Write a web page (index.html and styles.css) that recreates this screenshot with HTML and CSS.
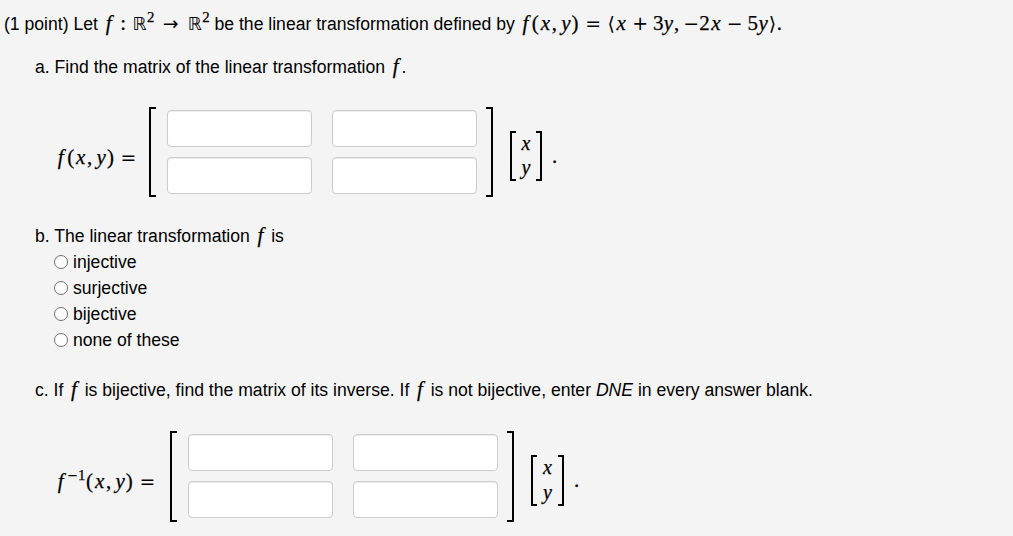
FILE: index.html
```html
<!DOCTYPE html>
<html lang="en">
<head>
<meta charset="utf-8">
<title>Linear transformation problem</title>
<link rel="stylesheet" href="styles.css">
</head>
<body>
<div class="page">
  <p class="intro">(1 point) Let <span class="m"><span class="g it w55">f</span><span class="g rel w278">:</span><span class="g bb w722">ℝ</span><sup class="g w5">2</sup><span class="g op rel w1">→</span><span class="g bb w722">ℝ</span><sup class="g w5">2</sup></span> be the linear transformation defined by <span class="m"><span class="g it w55">f</span><span class="g w389">(</span><span class="g it w572">x</span><span class="g w278">,</span><span class="th"></span><span class="g it w49">y</span><span class="g w389">)</span><span class="g op rel w778">=</span><span class="g ang w389">⟨</span><span class="g it w572">x</span><span class="g op bin w778">+</span><span class="g w5">3</span><span class="g it w49">y</span><span class="g w278">,</span><span class="th"></span><span class="g op w778">−</span><span class="g w5">2</span><span class="g it w572">x</span><span class="g op bin w778">−</span><span class="g w5">5</span><span class="g it w49">y</span><span class="g ang w389">⟩</span><span class="g w278">.</span></span></p>

  <p class="part part-a">a. Find the matrix of the linear transformation <span class="m"><span class="g it w55">f</span></span>.</p>

  <div class="eq eq1">
    <span class="m label label1"><span class="g it w55">f</span><span class="g w389">(</span><span class="g it w572">x</span><span class="g w278">,</span><span class="th"></span><span class="g it w49">y</span><span class="g w389">)</span><span class="g op rel w778">=</span></span>
    <div class="bmat">
      <span class="brk brk-l"></span>
      <div class="cells">
        <input class="ans" type="text" aria-label="row 1 column 1">
        <input class="ans" type="text" aria-label="row 1 column 2">
        <input class="ans" type="text" aria-label="row 2 column 1">
        <input class="ans" type="text" aria-label="row 2 column 2">
      </div>
      <span class="brk brk-r"></span>
    </div>
    <div class="vec">
      <span class="vb vb-l"></span>
      <span class="vcol m"><span class="vx it">x</span><span class="vx it">y</span></span>
      <span class="vb vb-r"></span>
    </div>
    <span class="m dot">.</span>
  </div>

  <p class="part part-b">b. The linear transformation <span class="m"><span class="g it w55">f</span></span> is</p>
  <ul class="choices">
    <li class="choice"><input class="radio" type="radio" name="t" aria-label="injective"><span>injective</span></li>
    <li class="choice"><input class="radio" type="radio" name="t" aria-label="surjective"><span>surjective</span></li>
    <li class="choice"><input class="radio" type="radio" name="t" aria-label="bijective"><span>bijective</span></li>
    <li class="choice"><input class="radio" type="radio" name="t" aria-label="none of these"><span>none of these</span></li>
  </ul>

  <p class="part part-c">c. If <span class="m"><span class="g it w55">f</span></span> is bijective, find the matrix of its inverse. If <span class="m"><span class="g it w55">f</span></span> is not bijective, enter <em>DNE</em> in every answer blank.</p>

  <div class="eq eq2">
    <span class="m label label2"><span class="g it w55">f</span><sup class="inv"><span class="g op w778">−</span><span class="g w5">1</span></sup><span class="g w389">(</span><span class="g it w572">x</span><span class="g w278">,</span><span class="th"></span><span class="g it w49">y</span><span class="g w389">)</span><span class="g op rel w778">=</span></span>
    <div class="bmat bmat2">
      <span class="brk brk-l"></span>
      <div class="cells">
        <input class="ans" type="text" aria-label="inverse row 1 column 1">
        <input class="ans" type="text" aria-label="inverse row 1 column 2">
        <input class="ans" type="text" aria-label="inverse row 2 column 1">
        <input class="ans" type="text" aria-label="inverse row 2 column 2">
      </div>
      <span class="brk brk-r"></span>
    </div>
    <div class="vec vec2">
      <span class="vb vb-l"></span>
      <span class="vcol m"><span class="vx it">x</span><span class="vx it">y</span></span>
      <span class="vb vb-r"></span>
    </div>
    <span class="m dot">.</span>
  </div>
</div>
</body>
</html>
```

FILE: styles.css
```css
html, body {
  margin: 0;
  padding: 0;
  background: #f4f4f4;
}

.page {
  padding: 13.5px 0 0 4px;
  font-family: "Liberation Sans", Arial, sans-serif;
  font-size: 17.6px;
  line-height: 20px;
  color: #000;
}

p {
  margin: 0;
}

/* ---------- math ---------- */
.m {
  font-family: "Liberation Serif", "DejaVu Serif", serif;
  font-size: 21px;
  line-height: 16px;
  white-space: nowrap;
  -webkit-text-stroke: 0.25px #000;
}
.g {
  display: inline-block;
  text-align: center;
  font-style: normal;
}
.it {
  font-style: italic;
}
.w278 { width: 0.278em; }
.w389 { width: 0.389em; }
.w49  { width: 0.49em; }
.w5   { width: 0.5em; }
.w55  { width: 0.55em; }
.w572 { width: 0.572em; }
.w722 { width: 0.722em; }
.w778 { width: 0.778em; }
.w1   { width: 1em; }

.rel {
  margin: 0 0.278em;
}
.bin {
  margin: 0 0.222em;
}
.th {
  display: inline-block;
  width: 0.167em;
}

/* operators drawn with a wider sans face, sizes kept in the same em grid */
.op {
  font-family: "DejaVu Sans", sans-serif;
  font-size: 0.9em;
  font-weight: normal;
  -webkit-text-stroke: 0;
}
.op.w778 { width: 0.864em; }
.op.w1   { width: 1.111em; }
.op.rel  { margin: 0 0.309em; }
.op.bin  { margin: 0 0.247em; }

.bb {
  font-family: "DejaVu Sans", sans-serif;
  font-size: 0.86em;
  width: 0.84em;
  -webkit-text-stroke: 0;
}
.ang {
  font-family: "DejaVu Sans", sans-serif;
  font-size: 0.9em;
  width: 0.432em;
  -webkit-text-stroke: 0;
}
.m sup {
  font-size: 0.707em;
  line-height: 0;
  vertical-align: 8px;
}
.m sup.inv {
  display: inline-block;
}

/* ---------- text parts ---------- */
.part {
  margin-left: 31px;
}
.part-a {
  margin-top: 23.5px;
}

/* ---------- equation rows ---------- */
.eq {
  display: flex;
  align-items: center;
  margin-left: 51px;
}
.eq1 {
  margin-top: 29.5px;
}
.eq2 {
  margin-top: 30.5px;
}

.label {
  flex: none;
  margin-top: 10px;
  line-height: 20px;
}
.label1 {
  width: 94px;
}
.label2 {
  width: 115px;
}

.bmat {
  flex: none;
  display: flex;
  align-items: stretch;
  height: 90px;
}
.bmat2 {
  height: 91px;
}
.brk {
  flex: none;
  box-sizing: border-box;
  width: 7px;
  border: 2px solid #000;
}
.brk-l {
  border-right: none;
  margin-right: 11px;
}
.brk-r {
  border-left: none;
  margin-left: 9px;
}
.cells {
  display: grid;
  grid-template-columns: 145px 145px;
  grid-template-rows: 37px 37px;
  column-gap: 20px;
  row-gap: 10px;
  padding: 3px 0;
}
.ans {
  box-sizing: border-box;
  width: 145px;
  height: 37px;
  margin: 0;
  padding: 4px 6px;
  border: 1px solid #cccccc;
  border-radius: 4px;
  background: #ffffff;
  box-shadow: inset 0 1px 1px rgba(0, 0, 0, 0.075);
  font: 16px "Liberation Sans", Arial, sans-serif;
}

.vec {
  flex: none;
  display: flex;
  align-items: stretch;
  box-sizing: border-box;
  width: 32px;
  height: 50px;
  margin-left: 17px;
  margin-top: 8px;
}
.vec2 {
  width: 33px;
  height: 51px;
}
.vb {
  flex: none;
  box-sizing: border-box;
  width: 6px;
  border: 2px solid #000;
}
.vb-l {
  border-right: none;
}
.vb-r {
  border-left: none;
}
.vcol {
  flex: 1 1 auto;
  min-width: 0;
  display: flex;
  flex-direction: column;
  justify-content: space-between;
  align-items: center;
  padding: 3px 0 5px;
  line-height: 18px;
}
.vx {
  display: block;
  font-size: 20px;
}
.dot {
  flex: none;
  margin-left: 10px;
  margin-top: 8px;
}

/* ---------- part b ---------- */
.part-b {
  margin-top: 26.5px;
  line-height: 26px;
}
.choices {
  list-style: none;
  margin: 0 0 0 50px;
  padding: 0;
  line-height: 26px;
}
.choice {
  display: flex;
  align-items: center;
  gap: 5px;
}
.radio {
  appearance: none;
  -webkit-appearance: none;
  box-sizing: border-box;
  width: 14px;
  height: 14px;
  margin: 0;
  border: 1px solid #6f6f6f;
  border-radius: 50%;
  background: #ffffff;
}

.part-c {
  margin-top: 27px;
}
.part-c em {
  font-style: italic;
}
```
